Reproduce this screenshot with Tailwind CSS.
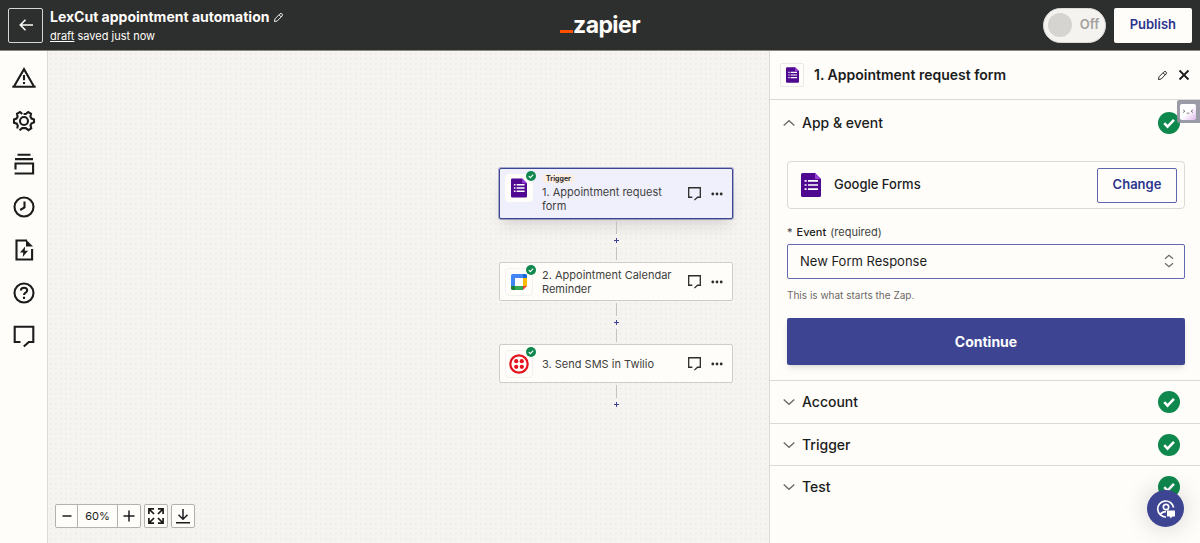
<!doctype html>
<html lang="en">

<head>
    <meta charset="UTF-8" />
    <meta name="viewport" content="width=device-width, initial-scale=1.0" />
    <title>LexCut appointment automation | Zapier</title>
    <script src="https://cdn.jsdelivr.net/npm/@tailwindcss/browser@4"></script>
</head>

<body>
    <!--Shared icons-->
    <svg class="hidden">
        <symbol id="check" viewBox="0 0 24 24">
            <circle cx="12" cy="12" r="12" fill="#0f884e" />
            <path d="M6.8 12.2l3.6 3.7 7-7.4" fill="none" stroke="#fff" stroke-width="2.8" />
        </symbol>
        <symbol id="forms" viewBox="0 0 20 24">
            <path d="M1.6 0H14l6 6v16.4a1.6 1.6 0 0 1-1.6 1.6H1.6A1.6 1.6 0 0 1 0 22.4V1.6A1.6 1.6 0 0 1 1.6 0z" fill="#4f0990" />
            <path d="M14 0l6 6h-6z" fill="#9a3fd5" />
            <path d="M7 7.9h10M7 12h10M7 16.1h10M3.6 7.9h2M3.6 12h2M3.6 16.1h2" stroke="#fff" stroke-width="1.7" />
        </symbol>
        <symbol id="comment" viewBox="0 0 24 24">
            <path d="M8.5 18H2.7V2.8h18.6V18h-4.500l-5 4.600" fill="none" stroke="currentColor" stroke-width="2.1" />
        </symbol>
        <symbol id="dots" viewBox="0 0 12 12">
            <circle cx="1.8" cy="6" r="1.4" fill="currentColor" />
            <circle cx="6" cy="6" r="1.4" fill="currentColor" />
            <circle cx="10.2" cy="6" r="1.4" fill="currentColor" />
        </symbol>
        <symbol id="pencil" viewBox="0 0 12 12">
            <path d="M1.6 10.4l.5-2.9 5.5-5.5c1.5-1.4 3.7.8 2.4 2.3L4.5 9.9zM6.7 3.2l2.2 2.2" fill="none" stroke="currentColor" />
        </symbol>
        <symbol id="chevron" viewBox="0 0 12 8">
            <path d="M.7 1.5L6 6.3l5.3-4.8" fill="none" stroke="currentColor" stroke-width="1.3" />
        </symbol>
    </svg>

    <div class="font-[Inter,sans-serif] h-screen flex flex-col bg-[#fffdf9] text-[#1b1c1c] overflow-hidden">
        <header class="h-[51px] shrink-0 flex items-center justify-between bg-[#2d2e2e] text-[#fffdf9] border-b border-[#8b8884] px-2">
            <div class="flex-1 flex items-center gap-[7px]">
                <button aria-label="Back" class="size-[35px] flex items-center justify-center border border-[#d7d5d2] rounded-xs">
                    <svg viewBox="0 0 16 16" class="size-4" fill="none" stroke="currentColor" stroke-width="1.6">
                        <path d="M15 8H2.5M7.5 2.8L2.3 8l5.2 5.2" />
                    </svg>
                </button>
                <div class="pt-[2px]">
                    <div class="flex items-center gap-1">
                        <h1 class="text-sm leading-5 font-bold whitespace-nowrap">LexCut appointment automation</h1>
                        <button aria-label="Rename"><svg class="size-[11px] block"><use href="#pencil" /></svg></button>
                    </div>
                    <p class="text-[11px] leading-[18px]"><a href="#" class="underline">draft</a> saved just now</p>
                </div>
            </div>
            <a href="#" aria-label="Zapier" class="flex items-end">
                <span class="w-[13px] h-[3px] mb-[6px] bg-[#ff4f00]"></span>
                <span class="text-[23px] leading-7 font-bold tracking-tight">zapier</span>
            </a>
            <div class="flex-1 flex items-center justify-end gap-2">
                <button role="switch" aria-checked="false" class="h-[35px] w-[63px] flex items-center gap-2 rounded-full bg-[#f5f3f0] border border-[#dddbd8] px-1 text-[13px] font-semibold text-[#a3a19f]">
                    <span class="size-6 rounded-full bg-[#d6d4d1]"></span>
                    Off
                </button>
                <button class="h-[35px] px-4 bg-[#fffdf9] rounded-xs text-[13px] font-semibold text-[#2b358e]">Publish</button>
            </div>
        </header>

        <div class="flex-1 min-h-0 flex">
            <nav class="w-12 shrink-0 flex flex-col items-center gap-[19px] pt-[15px] border-r border-[#dcdad6]">
                <a href="#" aria-label="Alerts">
                    <svg viewBox="0 0 24 24" class="size-6" fill="none" stroke="currentColor" stroke-width="2.1">
                        <path d="M.3 20.700h23.400M2 20.500L12 3.200l9.800 17M12 9v5.200M12 15.900v2.200" />
                    </svg>
                </a>
                <a href="#" aria-label="Settings">
                    <svg viewBox="0 0 24 24" class="size-6" fill="none" stroke="currentColor" stroke-width="2.1">
                        <circle cx="12" cy="12" r="4" />
                        <path d="M10.300 5L8 3 5 4.700l.6 3L4.500 9.600 2 10.500v3.200L4.800 14.700 5.800 16.600 5.200 19.500M7.500 21.300l2.700-2.200h3.600l2.700 2.100 2.800-1.800-.8-3 1.100-2 2.400-1v-2.900l-2.500-.9-1.100-2 .6-2.900L16.200 3l-2.400 2h-2.200" />
                    </svg>
                </a>
                <a href="#" aria-label="Versions">
                    <svg viewBox="0 0 24 24" class="size-6" fill="none" stroke="currentColor" stroke-width="2.1">
                        <path d="M5.500 2.800h13M3 7.100h18M3.500 17.500v-6h17.600V21.500H2.600" />
                    </svg>
                </a>
                <a href="#" aria-label="History">
                    <svg viewBox="0 0 24 24" class="size-6" fill="none" stroke="currentColor" stroke-width="2.1">
                        <circle cx="12" cy="12" r="9.500" />
                        <path d="M12.500 6.500v6L8.200 15" />
                    </svg>
                </a>
                <a href="#" aria-label="Zap runs">
                    <svg viewBox="0 0 24 24" class="size-6" fill="none" stroke="currentColor" stroke-width="2.1">
                        <path d="M15 2.500H4.500v19h15.600V11" />
                        <path d="M14 1.500l7 7h-7zM13.200 8.500L8 14.600h3.300l-.6 4.300 5.400-6.200h-3.400z" fill="currentColor" stroke="none" />
                    </svg>
                </a>
                <a href="#" aria-label="Help">
                    <svg viewBox="0 0 24 24" class="size-6" fill="none" stroke="currentColor" stroke-width="2.1">
                        <circle cx="12" cy="12" r="9.500" />
                        <path d="M8.900 9.600C8.900 5.700 15.200 5.800 15.200 9.400c0 2.300-3.200 2.200-3.200 4.700M12 15.800v2.200" />
                    </svg>
                </a>
                <a href="#" aria-label="Notes"><svg class="size-6"><use href="#comment" /></svg></a>
            </nav>

            <!--Canvas-->
            <main class="relative flex-1 bg-[#f6f4f1] bg-[radial-gradient(#eeebe8_1px,transparent_1px)] bg-[size:5px_5px]">
                <div class="absolute left-[451px] top-[117px] w-[234px] text-[11px] leading-[14px] text-[#403f3e]">
                    <div class="h-[51px] flex items-start gap-[9px] pl-[5px] pr-[9px] bg-[#f0effc] border border-[#3d4592] ring-1 ring-[#3d4592]/40 rounded-xs shadow-lg">
                        <div class="relative mt-[5px] size-7 shrink-0 flex items-center justify-center bg-[#fffdf9] rounded-sm">
                            <svg class="w-4 h-5"><use href="#forms" /></svg>
                            <svg class="absolute -top-[3px] -right-[3px] size-[10px]"><use href="#check" /></svg>
                        </div>
                        <div class="flex-1 pt-[5px]">
                            <span class="block w-fit px-1 rounded-full bg-[#fdeee3] text-[7px] leading-[9px] font-bold text-[#2d2e2e]">Trigger</span>
                            <p class="pt-[2px]">1. Appointment request form</p>
                        </div>
                        <div class="self-center flex items-center gap-[9px] text-[#2d2e2e]">
                            <button aria-label="Notes"><svg class="size-[15px] block"><use href="#comment" /></svg></button>
                            <button aria-label="More"><svg class="size-3 block"><use href="#dots" /></svg></button>
                        </div>
                    </div>
                    <div class="h-[43px] flex flex-col items-center justify-between py-[2px]">
                        <span class="w-px h-[13px] bg-[#c5c3c0]"></span>
                        <button aria-label="Add step"><svg viewBox="0 0 5 5" class="size-[5px] block" stroke="#3d4592"><path d="M2.500 0v5M0 2.500h5" /></svg></button>
                        <span class="w-px h-[13px] bg-[#c5c3c0]"></span>
                    </div>
                    <div class="h-[39px] flex items-center gap-[9px] pl-[5px] pr-[9px] bg-[#fffdf9] border border-[#cfcdca] rounded-xs">
                        <div class="relative size-7 shrink-0 flex items-center justify-center border border-[#f3f1ee] rounded-sm">
                            <svg viewBox="0 0 16 16" class="size-4">
                                <path d="M1.500 0H12v4H4v8H0V1.500A1.500 1.500 0 0 1 1.500 0z" fill="#4285f4" />
                                <path d="M12 0h2.500A1.500 1.500 0 0 1 16 1.500V4h-4z" fill="#1967d2" />
                                <path d="M12 4h4v8h-4z" fill="#fbbc04" />
                                <path d="M4 12h8v4H4z" fill="#34a853" />
                                <path d="M0 12h4v4H1.500A1.500 1.500 0 0 1 0 14.500z" fill="#188038" />
                                <path d="M12 12h4l-4 4z" fill="#ea4335" />
                                <path d="M4 4h8v8H4z" fill="#fff" />
                            </svg>
                            <svg class="absolute -top-1 -right-1 size-[10px]"><use href="#check" /></svg>
                        </div>
                        <p class="flex-1">2. Appointment Calendar Reminder</p>
                        <div class="flex items-center gap-[9px] text-[#2d2e2e]">
                            <button aria-label="Notes"><svg class="size-[15px] block"><use href="#comment" /></svg></button>
                            <button aria-label="More"><svg class="size-3 block"><use href="#dots" /></svg></button>
                        </div>
                    </div>
                    <div class="h-[43px] flex flex-col items-center justify-between py-[2px]">
                        <span class="w-px h-[13px] bg-[#c5c3c0]"></span>
                        <button aria-label="Add step"><svg viewBox="0 0 5 5" class="size-[5px] block" stroke="#3d4592"><path d="M2.500 0v5M0 2.500h5" /></svg></button>
                        <span class="w-px h-[13px] bg-[#c5c3c0]"></span>
                    </div>
                    <div class="h-[39px] flex items-center gap-[9px] pl-[5px] pr-[9px] bg-[#fffdf9] border border-[#cfcdca] rounded-xs">
                        <div class="relative size-7 shrink-0 flex items-center justify-center border border-[#f3f1ee] rounded-sm">
                            <svg viewBox="0 0 20 20" class="size-5" fill="#e3141e">
                                <circle cx="10" cy="10" r="8.700" fill="none" stroke="#e3141e" stroke-width="2.200" />
                                <circle cx="7.200" cy="7.200" r="2.100" />
                                <circle cx="12.800" cy="7.200" r="2.100" />
                                <circle cx="7.200" cy="12.800" r="2.100" />
                                <circle cx="12.800" cy="12.800" r="2.100" />
                            </svg>
                            <svg class="absolute -top-1 -right-1 size-[10px]"><use href="#check" /></svg>
                        </div>
                        <p class="flex-1">3. Send SMS in Twilio</p>
                        <div class="flex items-center gap-[9px] text-[#2d2e2e]">
                            <button aria-label="Notes"><svg class="size-[15px] block"><use href="#comment" /></svg></button>
                            <button aria-label="More"><svg class="size-3 block"><use href="#dots" /></svg></button>
                        </div>
                    </div>
                    <div class="flex flex-col items-center gap-1 py-[2px]">
                        <span class="w-px h-[13px] bg-[#c5c3c0]"></span>
                        <button aria-label="Add step"><svg viewBox="0 0 5 5" class="size-[5px] block" stroke="#3d4592"><path d="M2.500 0v5M0 2.500h5" /></svg></button>
                    </div>
                </div>

                <!--Zoom controls-->
                <div class="absolute left-[7px] bottom-[15px] flex gap-[3px]">
                    <div class="h-6 flex items-stretch bg-[#fffdf9] border border-[#b5b2ae] rounded-xs divide-x divide-[#b5b2ae]">
                        <button aria-label="Zoom out" class="w-[22px] flex items-center justify-center">
                            <svg viewBox="0 0 12 12" class="size-3" stroke="currentColor" stroke-width="1.500"><path d="M1.500 6h9" /></svg>
                        </button>
                        <span class="w-10 flex items-center justify-center text-[11px]">60%</span>
                        <button aria-label="Zoom in" class="w-[22px] flex items-center justify-center">
                            <svg viewBox="0 0 12 12" class="size-3" stroke="currentColor" stroke-width="1.500"><path d="M.5 6h11M6 .5v11" /></svg>
                        </button>
                    </div>
                    <button aria-label="Fit to screen" class="size-6 flex items-center justify-center bg-[#fffdf9] border border-[#b5b2ae] rounded-xs">
                        <svg viewBox="0 0 16 16" class="size-4" fill="none" stroke="currentColor" stroke-width="1.700">
                            <path d="M.9 6V.9H6M.9.9L6 6M10 .9h5.100V6M15.100.9L10 6M.9 10v5.100H6M.9 15.100L6 10M10 15.100h5.100V10M15.100 15.100L10 10" />
                        </svg>
                    </button>
                    <button aria-label="Download" class="size-6 flex items-center justify-center bg-[#fffdf9] border border-[#b5b2ae] rounded-xs">
                        <svg viewBox="0 0 16 16" class="size-4" fill="none" stroke="currentColor" stroke-width="1.500">
                            <path d="M8 1v10M3.500 6.700L8 11.200l4.500-4.500M1 14.800h14" />
                        </svg>
                    </button>
                </div>
            </main>

            <!--Step editor-->
            <aside class="relative w-[431px] shrink-0 border-l border-[#dcdad6]">
                <div class="h-[49px] flex items-center gap-[10px] pl-[10px] pr-[10px] border-b border-[#dcdad6]">
                    <span class="size-6 flex items-center justify-center border border-[#ebe9e6] rounded-xs">
                        <svg class="w-[13px] h-4"><use href="#forms" /></svg>
                    </span>
                    <h2 class="flex-1 text-sm font-semibold">1. Appointment request form</h2>
                    <button aria-label="Rename step"><svg class="size-[11px] block"><use href="#pencil" /></svg></button>
                    <button aria-label="Close">
                        <svg viewBox="0 0 12 12" class="size-3 block" stroke="currentColor" stroke-width="1.800"><path d="M1.500 1.500l9 9M10.500 1.500l-9 9" /></svg>
                    </button>
                </div>

                <section class="border-b border-[#dcdad6]">
                    <button class="w-full h-[46px] flex items-center gap-[7px] pl-[13px] pr-5 text-left">
                        <svg class="w-3 h-2 rotate-180 text-[#6b6967]"><use href="#chevron" /></svg>
                        <span class="flex-1 text-sm font-medium">App &amp; event</span>
                        <svg class="size-[22px]"><use href="#check" /></svg>
                    </button>
                    <div class="pl-[17px] pr-[15px] py-[15px]">
                        <div class="h-12 flex items-center gap-[13px] pl-[13px] pr-[7px] border border-[#dcdad6] rounded-sm">
                            <svg class="w-5 h-6"><use href="#forms" /></svg>
                            <span class="flex-1 text-[13px] font-medium">Google Forms</span>
                            <button class="h-[35px] w-20 border border-[#5d65b0] rounded-xs text-[13px] font-semibold text-[#2b358e]">Change</button>
                        </div>
                        <label for="event" class="block pt-4 pb-1 text-[11px] leading-[15px] text-[#403f3e]">* <span class="font-medium text-[#1b1c1c] px-px">Event</span> (required)</label>
                        <div class="relative">
                            <select id="event" class="appearance-none w-full h-[35px] px-3 border border-[#6269b5] rounded-xs text-[13px]">
                                <option>New Form Response</option>
                            </select>
                            <svg viewBox="0 0 10 14" class="absolute right-[11px] top-[10px] w-[10px] h-[14px] pointer-events-none text-[#6b6967]" fill="none" stroke="currentColor" stroke-width="1.200">
                                <path d="M1 4.800L5 1.200l4 3.600M1 9.200l4 3.600 4-3.600" />
                            </svg>
                        </div>
                        <p class="pt-[9px] pb-4 text-[10px] leading-[14px] text-[#6b6967]">This is what starts the Zap.</p>
                        <button class="w-full h-[47px] bg-[#3d4592] rounded-xs text-sm font-bold text-white shadow-md">Continue</button>
                    </div>
                </section>

                <section class="border-b border-[#dcdad6]">
                    <button class="w-full h-[42px] flex items-center gap-[7px] pl-[13px] pr-5 text-left">
                        <svg class="w-3 h-2 text-[#6b6967]"><use href="#chevron" /></svg>
                        <span class="flex-1 text-sm font-medium">Account</span>
                        <svg class="size-[22px]"><use href="#check" /></svg>
                    </button>
                </section>
                <section class="border-b border-[#dcdad6]">
                    <button class="w-full h-[41px] flex items-center gap-[7px] pl-[13px] pr-5 text-left">
                        <svg class="w-3 h-2 text-[#6b6967]"><use href="#chevron" /></svg>
                        <span class="flex-1 text-sm font-medium">Trigger</span>
                        <svg class="size-[22px]"><use href="#check" /></svg>
                    </button>
                </section>
                <section>
                    <button class="w-full h-[41px] flex items-center gap-[7px] pl-[13px] pr-5 text-left">
                        <svg class="w-3 h-2 text-[#6b6967]"><use href="#chevron" /></svg>
                        <span class="flex-1 text-sm font-medium">Test</span>
                        <svg class="size-[22px]"><use href="#check" /></svg>
                    </button>
                </section>

                <!--Browser helper tab-->
                <div class="absolute right-0 top-[49px] w-[23px] h-[23px] flex items-center pl-[3px] rounded-l-xs bg-[#8f909c]/90">
                    <span class="size-4 flex items-center justify-center rounded-xs bg-linear-to-br from-white from-50% to-[#dcb8ee]">
                        <svg viewBox="0 0 12 6" class="w-3 h-[6px]" fill="none" stroke="#6b6967" stroke-width=".8"><path d="M1 .8l2 1.400-2 1.400M11 .8L9 2.200l2 1.400M4.600 4.200h2.600" /></svg>
                    </span>
                </div>

                <!--Support button-->
                <button aria-label="Get help" class="absolute right-4 bottom-4 size-[37px] flex items-center justify-center rounded-full bg-[#3d4592] text-white shadow-[0_0_24px_rgba(0,0,0,0.18)]">
                    <svg viewBox="0 0 20 20" class="size-5" fill="none" stroke="currentColor" stroke-width="1.700">
                        <path d="M17.600 8.500A8 8 0 1 0 10 18M4.500 15.500c1-1.800 3-2.800 5.500-2.800" />
                        <circle cx="10" cy="8" r="2.700" />
                        <path d="M11 11.500h8v6h-2.500l-2 2-.5-2h-3z" fill="currentColor" stroke="none" />
                    </svg>
                </button>
            </aside>
        </div>
    </div>
</body>

</html>
